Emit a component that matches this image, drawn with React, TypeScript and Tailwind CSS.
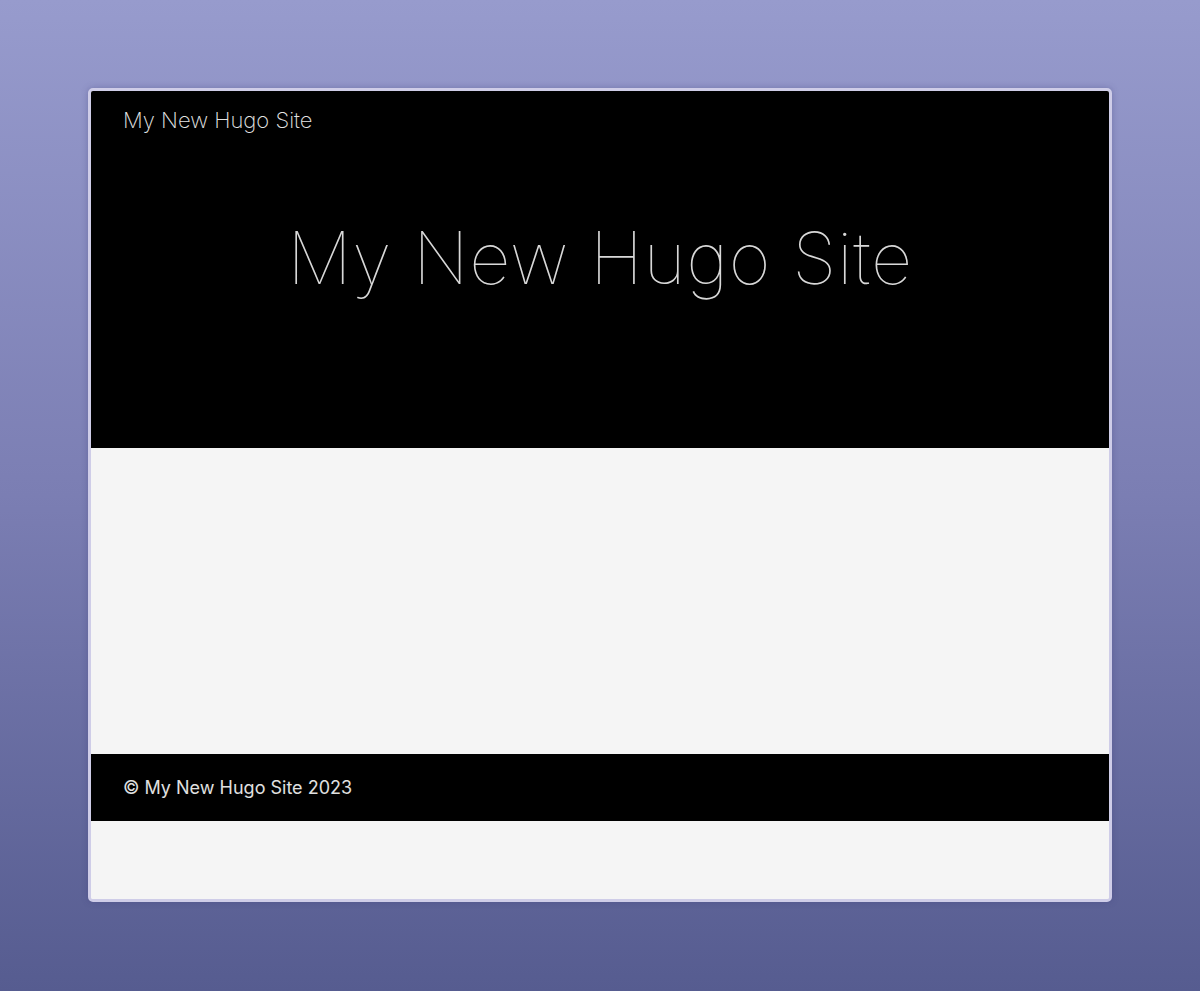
export default function App() {
  return (
    <div className="min-h-[991px] w-full bg-gradient-to-b from-[#979bcd] via-[#7b7eb3] to-[#565c90] flex items-start justify-center pt-[88px] font-['Inter',sans-serif]">
      <div className="w-[1024px] h-[814px] rounded-[5px] border-[3px] border-[#cfcde8] bg-[#f5f5f5] flex flex-col overflow-hidden shadow-[0_0_6px_rgba(60,60,120,0.35)]">
        {/* Header */}
        <header className="bg-black h-[357px] flex flex-col">
          <div className="px-[32px] pt-[14px] text-[22px] font-extralight text-[#e4e4e4] leading-[30px]">
            My New Hugo Site
          </div>
          <h1 className="text-center mt-[87px] text-[72px] font-thin text-[#d8d8d8] leading-none tracking-[0.01em]">
            My New Hugo Site
          </h1>
        </header>

        {/* Main */}
        <main className="h-[306px] bg-[#f5f5f5]" />

        {/* Footer */}
        <footer className="bg-black h-[67px] flex items-center px-[32px] text-[18px] text-[#e0e0e0]">
          © My New Hugo Site 2023
        </footer>

        <div className="flex-1 bg-[#f5f5f5]" />
      </div>
    </div>
  );
}
